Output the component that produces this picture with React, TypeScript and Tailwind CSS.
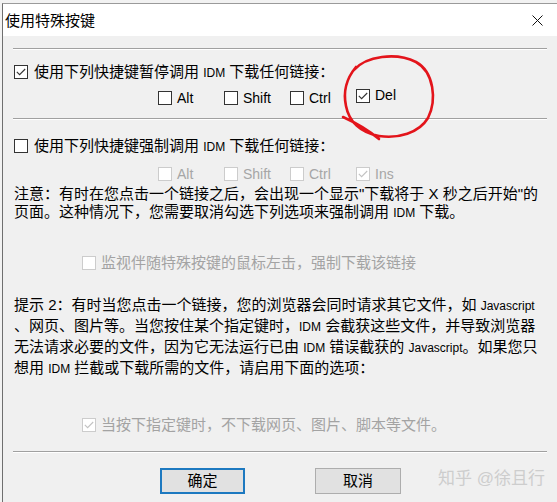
import clsx from "clsx";

type BoxProps = { checked?: boolean; disabled?: boolean };

// Win32-style checkbox square with a thin check stroke
const Box = ({ checked, disabled }: BoxProps) => (
  <span
    className={clsx(
      "w-[14px] h-[14px] border bg-white flex items-center justify-center shrink-0",
      disabled ? "border-[#cccccc]" : "border-[#333333]"
    )}
  >
    {checked && (
      <svg width="10" height="8" viewBox="0 0 10 8">
        <path
          d="M0.8 3.8 L3.6 6.6 L9.2 1"
          fill="none"
          stroke={disabled ? "#c2c2c2" : "#333333"}
          strokeWidth="1.1"
        />
      </svg>
    )}
  </span>
);

const KeyItem = ({
  label,
  checked,
  disabled,
  className,
}: BoxProps & { label: string; className?: string }) => (
  <div className={clsx("w-[66px] flex items-center gap-[5px]", className)}>
    <Box checked={checked} disabled={disabled} />
    <span className={clsx("text-[14px]", disabled ? "text-[#a6a6a6]" : "text-black")}>{label}</span>
  </div>
);

const Sep = ({ className }: { className?: string }) => (
  <div className={clsx("w-[534px] -ml-px h-[2px] border-t border-[#a0a0a0] border-b border-b-white", className)} />
);

const Idm = () => <span className="text-[12px]">IDM</span>;

export default function App() {
  return (
    <div className="relative w-[557px] h-[502px] overflow-hidden bg-[#f2f2f2] pl-[2px] pt-[3px] font-['Liberation_Sans','Noto_Sans_CJK_SC',sans-serif] text-black">
      <div className="h-full flex flex-col border-l border-t border-l-[#6f6f6f] border-t-[#9a9a9a]">
        {/* title bar */}
        <div className="h-[32px] shrink-0 bg-white flex items-center pl-[2px] pr-[14px]">
          <span className="text-[15px] leading-none">使用特殊按键</span>
          <svg className="ml-auto" width="11" height="11" viewBox="0 0 11 11">
            <path d="M0.5 0.5 L10.5 10.5 M10.5 0.5 L0.5 10.5" stroke="#111" strokeWidth="1" />
          </svg>
        </div>

        {/* dialog body */}
        <div className="flex-1 bg-[#f0f0f0] flex flex-col pl-[11px] text-[15px]">
          <Sep className="mt-[12px]" />

          <div className="mt-[12px] h-[20px] flex items-center gap-[6px]">
            <Box checked />
            <span className="whitespace-nowrap">
              使用下列快捷键暂停调用 <Idm /> 下载任何链接：
            </span>
          </div>

          <div className="mt-[6px] h-[20px] ml-[144px] flex items-center">
            <KeyItem label="Alt" />
            <KeyItem label="Shift" />
            <KeyItem label="Ctrl" />
            <KeyItem label="Del" checked className="mb-[5px]" />
          </div>

          <Sep className="mt-[10px]" />

          <div className="mt-[16px] h-[20px] flex items-center gap-[6px]">
            <Box />
            <span className="whitespace-nowrap">
              使用下列快捷键强制调用 <Idm /> 下载任何链接：
            </span>
          </div>

          <div className="mt-[8px] h-[20px] ml-[144px] flex items-center">
            <KeyItem label="Alt" disabled />
            <KeyItem label="Shift" disabled />
            <KeyItem label="Ctrl" disabled />
            <KeyItem label="Ins" checked disabled />
          </div>

          <div className="mt-[1px] leading-[18px] whitespace-nowrap">
            <div>
              注意：有时在您点击一个链接之后，会出现一个显示"下载将于 X 秒之后开始"的
            </div>
            <div>
              页面。这种情况下，您需要取消勾选下列选项来强制调用 <Idm /> 下载。
            </div>
          </div>

          <div className="mt-[31px] h-[20px] ml-[68px] flex items-center gap-[5px]">
            <Box disabled />
            <span className="whitespace-nowrap text-[#a3a3a3]">监视伴随特殊按键的鼠标左击，强制下载该链接</span>
          </div>

          <div className="mt-[22px] leading-[20px] whitespace-nowrap">
            <div>
              提示 2：有时当您点击一个链接，您的浏览器会同时请求其它文件，如 <span className="text-[12px]">Javascript</span>
            </div>
            <div>
              、网页、图片等。当您按住某个指定键时，<Idm /> 会截获这些文件，并导致浏览器
            </div>
            <div>
              无法请求必要的文件，因为它无法运行已由 <Idm /> 错误截获的 <span className="text-[12px]">Javascript</span>。如果您只
            </div>
            <div>
              想用 <Idm /> 拦截或下载所需的文件，请启用下面的选项：
            </div>
          </div>

          <div className="mt-[36px] h-[20px] ml-[68px] flex items-center gap-[5px]">
            <Box checked disabled />
            <span className="whitespace-nowrap text-[#a3a3a3]">当按下指定键时，不下载网页、图片、脚本等文件。</span>
          </div>

          <Sep className="mt-[16px]" />

          <div className="mt-[15px] ml-[146px] flex items-center gap-[70px]">
            <button className="w-[85px] h-[26px] bg-[#e1e1e1] border-2 border-[#1d79c0] text-[15px] flex items-center justify-center">
              确定
            </button>
            <button className="w-[86px] h-[26px] bg-[#e1e1e1] border border-[#adadad] text-[15px] flex items-center justify-center">
              取消
            </button>
          </div>
        </div>
      </div>

      {/* site watermark */}
      <div className="absolute left-[438px] top-[466px] text-[17px] text-[#cdcdcd] whitespace-nowrap pointer-events-none">
        知乎 @徐且行
      </div>

      {/* red hand-drawn loop around the Del option */}
      <svg className="absolute inset-0 pointer-events-none" width="557" height="502" viewBox="0 0 557 502">
        <path
          d="M354 70 C366 56 396 52 416 62 C434 72 437 100 428 118 C419 133 398 139 379 136 C361 133 349 122 346 106 C343 92 346 79 356 67 M343 117 C354 122 367 129 379 139"
          fill="none"
          stroke="#e3141b"
          strokeWidth="2.6"
          strokeLinecap="round"
        />
      </svg>
    </div>
  );
}
